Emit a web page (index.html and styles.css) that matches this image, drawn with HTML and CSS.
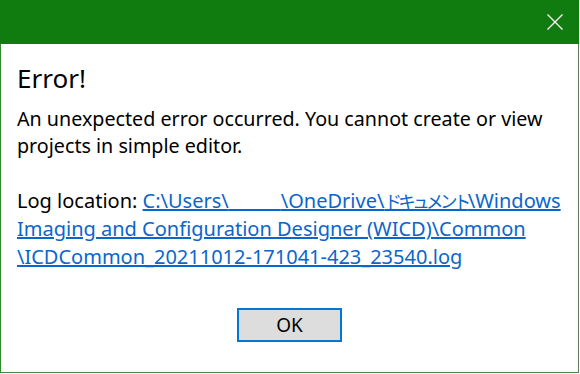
FILE: index.html
```html
<!DOCTYPE html>
<html lang="en">
<head>
  <meta charset="UTF-8">
  <title>Error!</title>
  <link rel="stylesheet" href="styles.css">
</head>
<body>

  <div class="window">
    <!-- title bar -->
    <div class="title-bar">
      <button class="close-btn" aria-label="Close">
        <svg width="16" height="16" viewBox="0 0 16 16">
          <path d="M0.5 0.5 L15.5 15.5 M15.5 0.5 L0.5 15.5" stroke="#fff" stroke-width="1.3" fill="none"/>
        </svg>
      </button>
    </div>

    <!-- message -->
    <div class="content">
      <h1>Error!</h1>
      <p class="msg">An unexpected error occurred. You cannot create or view projects in simple editor.</p>
      <p class="log">Log location: <a href="#">C:\Users\<span class="blank">&nbsp;&nbsp;&nbsp;&nbsp;&nbsp;&nbsp;&nbsp;&nbsp;&nbsp;&nbsp;</span>\OneDrive\<span class="jp">ドキュメント</span>\Windows<br>Imaging and Configuration Designer (WICD)\Common<br>\ICDCommon_20211012-171041-423_23540.log</a></p>
    </div>

    <div class="actions">
      <button class="ok-btn">OK</button>
    </div>
  </div>

</body>
</html>
```

FILE: styles.css
```css
/* base */
html, body {
  margin: 0; padding: 0;
  background: #fff;
  font-family: 'Noto Sans', 'Noto Sans CJK JP', sans-serif;
  color: #000;
}

/* window */
.window {
  width: 579px; height: 373px;
  box-sizing: border-box;
  border: 1px solid #2f8a2f;
  border-right-color: #5d7a5d;
  border-bottom-color: #4f7f4f;
  display: flex; flex-direction: column;
  background: #fff;
}
.title-bar {
  height: 44px; margin: -1px -1px 0 -1px;
  background: #107c10;
  display: flex; align-items: center; justify-content: flex-end;
}
.close-btn {
  background: none; border: none; padding: 0;
  width: 46px; height: 44px;
  display: flex; align-items: center; justify-content: center;
  margin-right: 1px;
}

/* content */
.content {
  flex: 1;
  padding: 17px 16px 0 16px;
}
.content h1 {
  font-weight: 400; font-size: 26px;
  margin: 0 0 10px; line-height: 34px;
}
.content p {
  font-size: 19.7px; line-height: 27px;
  margin: 0;
}
.content .msg { margin-bottom: 28px; }
.content .log {
  font-size: 20px; line-height: 28px;
  white-space: nowrap;
}
.content a {
  color: #0a66cc;
  text-decoration: underline;
}
.content .jp {
  font-family: 'Noto Sans CJK JP', sans-serif;
  font-size: 17.5px; letter-spacing: -3.6px;
}

/* button */
.actions {
  display: flex; justify-content: center;
  padding-bottom: 30px;
}
.ok-btn {
  width: 105px; height: 34px;
  background: #dddddd;
  border: 2px solid #0078d7;
  font-family: inherit; font-size: 19px;
  color: #000;
  padding: 0;
}
```
